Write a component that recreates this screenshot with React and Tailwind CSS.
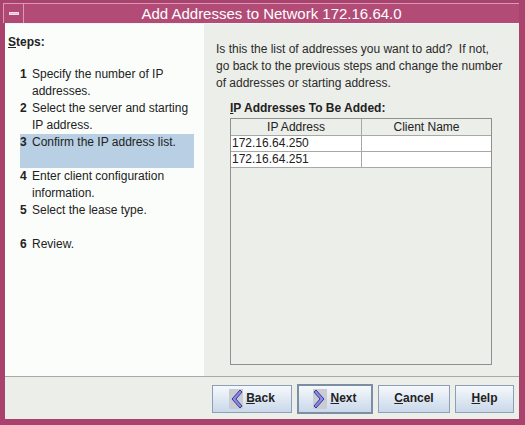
const steps = [
  { n: "1", lines: ["Specify the number of IP", "addresses."] },
  { n: "2", lines: ["Select the server and starting", "IP address."] },
  { n: "3", lines: ["Confirm the IP address list."], active: true },
  { n: "4", lines: ["Enter client configuration", "information."] },
  { n: "5", lines: ["Select the lease type."] },
  { n: "6", lines: ["Review."] },
];

const rows = ["172.16.64.250", "172.16.64.251"];

function Arrow({ left }) {
  return (
    <svg width="14" height="20" viewBox="0 0 14 20" className="mr-[3px]">
      <rect x="0" y="0" width="14" height="20" fill="#c9ccd2" />
      <path
        d={left ? "M11 1 L3 10 L11 19 L13 17 L7 10 L13 3 Z" : "M3 1 L11 10 L3 19 L1 17 L7 10 L1 3 Z"}
        fill="#8c88e8"
        stroke="#3a3a8a"
        strokeWidth="1"
      />
    </svg>
  );
}

function Button({ children, className = "" }) {
  return (
    <button
      className={`flex items-center justify-center h-[28px] bg-gradient-to-b from-[#f6f9fc] to-[#c9d8ea] text-[12px] font-bold text-[#222] ${className}`}
    >
      {children}
    </button>
  );
}

export default function App() {
  return (
    <div className="w-[525px] h-[425px] flex flex-col bg-[#a9426d] font-['Liberation_Sans',Arial,sans-serif] text-[12px] leading-[17px] text-[#222]">
      {}
      <div className="h-[23px] flex items-stretch pt-[3px] pl-[3px] pr-[6px]">
        <div className="w-[21px] border border-[#d99ab5] border-b-0 flex items-center justify-center bg-[#b04a75]">
          <div className="w-[10px] h-[3px] bg-[#e8c0d2] border border-[#f3dce6]" />
        </div>
        <div className="flex-1 flex items-center justify-center bg-[#b24c77] border-t border-[#d99ab5] text-white text-[15px] leading-[19px]">
          Add Addresses to Network 172.16.64.0
        </div>
      </div>

      <div className="flex-1 flex flex-col ml-[5px] mr-[6px] bg-[#eceee9] border-t border-[#f4f4f4]">
        <div className="flex-1 flex min-h-0">
          {}
          <div className="w-[199px] bg-[#fbfdfb] pt-[10px] pl-[3px]">
            <div className="font-bold">
              <span className="underline">S</span>teps:
            </div>
            <div className="mt-[15px] flex flex-col">
              {steps.map((s) => (
                <div
                  key={s.n}
                  className={`ml-[12px] w-[174px] min-h-[34px] flex ${s.active ? "bg-[#b8cfe4]" : ""}`}
                >
                  <span className="w-[12px] font-bold">{s.n}</span>
                  <div>
                    {s.lines.map((l) => (
                      <div key={l}>{l}</div>
                    ))}
                  </div>
                </div>
              ))}
            </div>
          </div>

          {}
          <div className="flex-1 pt-[17px] pl-[12px]">
            <p className="text-[#2a2a2a]">
              Is this the list of addresses you want to add?&nbsp; If not,
              <br />
              go back to the previous steps and change the number
              <br />
              of addresses or starting address.
            </p>
            <div className="ml-[14px] mt-[8px] font-bold">
              <span className="underline">I</span>P Addresses To Be Added:
            </div>
            <div className="ml-[14px] mt-[1px] w-[262px] h-[247px] border border-[#8f918e] bg-[#eceee9] flex flex-col">
              <div className="flex h-[17px] border-b border-[#a7a9a6]">
                <div className="w-[131px] text-center border-r border-[#a7a9a6] leading-[16px]">IP Address</div>
                <div className="flex-1 text-center leading-[16px]">Client Name</div>
              </div>
              {rows.map((r) => (
                <div key={r} className="flex h-[16px] bg-white border-b border-[#a7a9a6]">
                  <div className="w-[131px] pl-[1px] border-r border-[#a7a9a6] leading-[15px]">{r}</div>
                  <div className="flex-1" />
                </div>
              ))}
            </div>
          </div>
        </div>

        {}
        <div className="h-[43px] border-t border-[#a8aaa6] flex items-center justify-end pr-[5px] gap-[5px] pt-[1px]">
          <Button className="w-[80px] border border-[#8d9fb7]">
            <Arrow left />
            <span>
              <span className="underline">B</span>ack
            </span>
          </Button>
          <Button className="w-[76px] h-[30px] border-2 border-[#7c8da4]">
            <Arrow />
            <span>
              <span className="underline">N</span>ext
            </span>
          </Button>
          <Button className="w-[72px] border border-[#8d9fb7]">
            <span>
              <span className="underline">C</span>ancel
            </span>
          </Button>
          <Button className="w-[59px] border border-[#8d9fb7]">
            <span>
              <span className="underline">H</span>elp
            </span>
          </Button>
        </div>
      </div>
      <div className="h-[6px]" />
    </div>
  );
}
